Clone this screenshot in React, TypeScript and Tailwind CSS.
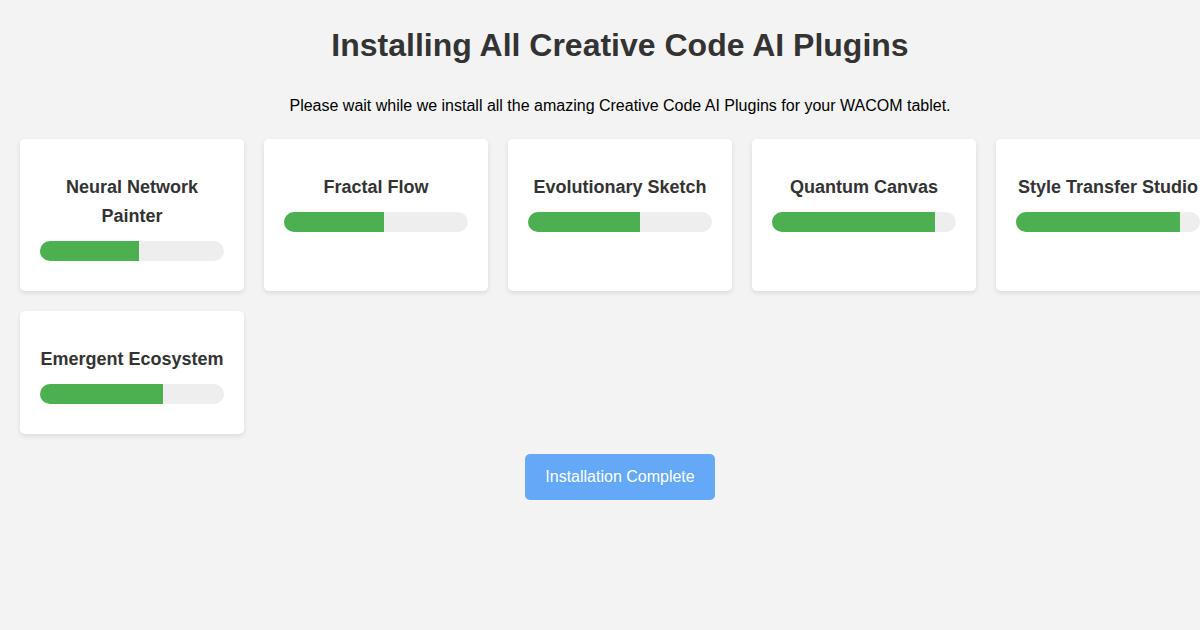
import React from "react";

const plugins: { name: string; pct: number }[] = [
  { name: "Neural Network Painter", pct: 99 },
  { name: "Fractal Flow", pct: 100 },
  { name: "Evolutionary Sketch", pct: 112 },
  { name: "Quantum Canvas", pct: 163 },
  { name: "Style Transfer Studio", pct: 164 },
  { name: "Emergent Ecosystem", pct: 123 },
];

export default function App() {
  return (
    <div
      className="w-full h-[630px] overflow-hidden bg-[#f3f3f3]"
      style={{ fontFamily: '"Liberation Sans", Arial, sans-serif' }}
    >
      <div className="w-[1240px] pt-[27px] flex flex-col items-center">
        <h1 className="text-[32px] leading-[37px] font-bold text-[#333333] text-center">
          Installing All Creative Code AI Plugins
        </h1>
        <p className="mt-[33px] text-[16px] leading-[18px] text-black text-center">
          Please wait while we install all the amazing Creative Code AI Plugins for your WACOM tablet.
        </p>
        <div className="mt-[24px] w-full px-[20px] flex flex-wrap gap-[20px]">
          {plugins.map((p) => (
            <div
              key={p.name}
              className="w-[224px] bg-white rounded-[5px] shadow-[0_2px_5px_rgba(0,0,0,0.1)] px-[20px] pt-[20px] pb-[20px] flex flex-col"
            >
              <h3 className="mt-[14px] mb-[10px] text-[18px] leading-[29px] font-bold text-[#333333] text-center">
                {p.name}
              </h3>
              <div className="h-[20px] w-full rounded-[10px] bg-[#eeeeee] overflow-hidden mb-[10px]">
                <div className="h-full bg-[#4caf50]" style={{ width: `${p.pct}px` }} />
              </div>
            </div>
          ))}
        </div>
        <button className="mt-[20px] w-[190px] h-[46px] rounded-[5px] bg-[#63a9f8] text-white text-[16px]">
          Installation Complete
        </button>
      </div>
    </div>
  );
}
